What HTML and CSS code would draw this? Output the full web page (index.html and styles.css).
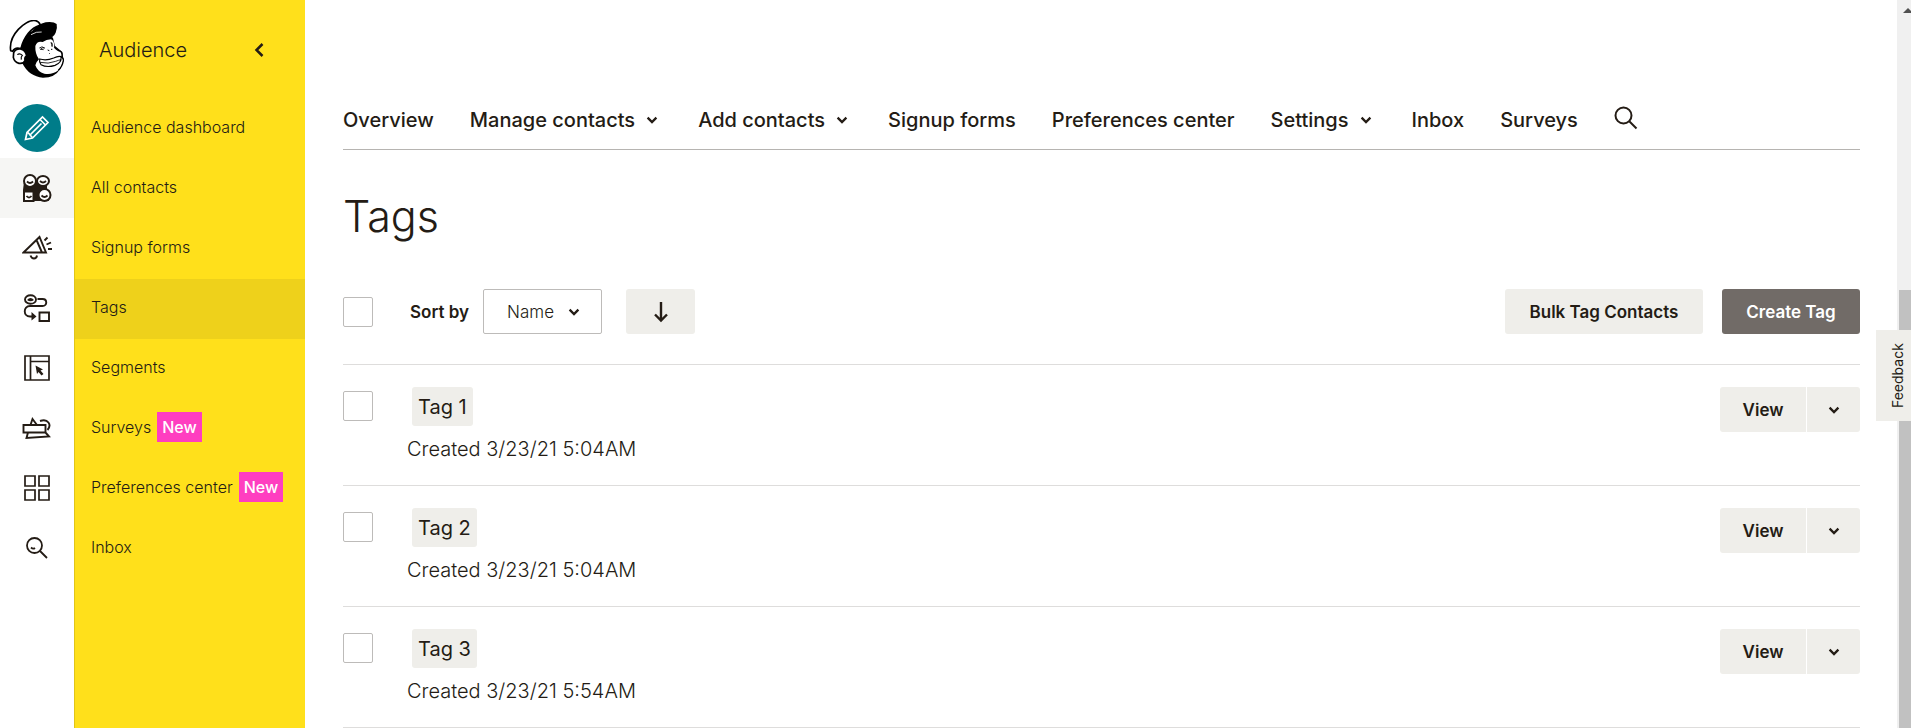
FILE: index.html
```html
<!DOCTYPE html>
<html lang="en">
<head>
<meta charset="utf-8">
<title>Tags</title>
<link rel="stylesheet" href="styles.css">
</head>
<body>
<svg class="defs" aria-hidden="true">
  <symbol id="chevron" viewBox="0 0 12 8"><path d="M1.600 1.600 6 6l4.400-4.400" fill="none" stroke="currentColor" stroke-width="2.300"/></symbol>
</svg>
<div class="app">
  <nav class="rail" aria-label="Main">
    <a class="logo" href="#" aria-label="Home">
      <svg width="56" height="58" viewBox="26 30 168 174">
        <path d="M60 112 L80 66 L120 60 L150 74 L158 84 L164 108 L186 126 L190 152 L180 176 Q164 203 128 203 Q86 200 66 160Z" fill="#000"/>
        <path d="M96 62 Q112 42 136 37 Q160 34 169 42 Q172 56 166 68 Q163 76 155 82 Q138 66 112 70 L88 76Z" fill="#000"/>
        <path d="M31 122 Q26 88 54 58 Q84 28 106 32 Q116 34 120 45 Q98 52 84 70 Q68 90 62 116 Q44 110 37 124Z" fill="#fff" stroke="#000" stroke-width="5" stroke-linejoin="round"/>
        <path d="M92 74 Q108 64 124 66" fill="none" stroke="#fff" stroke-width="2.500"/>
        <path d="M40 128 Q46 116 60 117 Q76 120 79 138 Q72 140 74 152 Q70 162 56 160 Q42 156 39 142Z" fill="#fff" stroke="#000" stroke-width="5"/>
        <path d="M51 134 Q58 128 66 136 Q61 140 63 149" fill="none" stroke="#000" stroke-width="3.500"/>
        <path d="M105 108 Q110 92 127 96 Q138 88 152 88 Q162 92 162 110 Q166 118 180 124 Q187 130 184 144 Q186 142 189 147 Q188 168 174 181 Q154 196 132 191 Q112 186 105 166 Q107 156 116 148 Q104 132 105 108Z" fill="#fff"/>
        <path d="M117 114 Q125 107 133 114 Q127 111 120 118 L130 119" fill="none" stroke="#000" stroke-width="2.500"/>
        <path d="M151 99 Q156 97 155 110" fill="none" stroke="#000" stroke-width="4"/>
        <path d="M142 120l5 2M152 118l4 0M146 129l2 2" stroke="#000" stroke-width="3"/>
        <path d="M162 110 Q166 118 180 124 Q188 130 184 142 Q190 144 189 152 Q186 170 174 181" fill="none" stroke="#000" stroke-width="4"/>
        <path d="M118 147 Q138 153 160 144 Q174 137 182 140 Q185 158 164 166 Q140 174 122 164 Q116 156 118 147Z" fill="#fff" stroke="#000" stroke-width="3.500"/>
        <path d="M119 157 Q144 163 166 154 Q176 150 182 149" fill="none" stroke="#000" stroke-width="2.500"/>
      </svg>
    </a>
    <ul class="rail-list">
      <li><a class="rail-item" href="#" aria-label="Create"><span class="create">
        <svg width="26" height="26" viewBox="0 0 26 26" fill="none" stroke="#fff" stroke-width="1.700"><path d="M1.500 24.500 3 17.500 18.500 2 24 7.500 8.500 23Z"/><path d="M16 4.500l5.500 5.500M6 20 17.500 8.500M3.500 17.500l1.500 1 1 1.500 1 1 1.200 1.500"/></svg></span></a></li>
      <li><a class="rail-item active" href="#" aria-label="Audience">
        <svg width="30" height="30" viewBox="0 0 30 30"><path d="M2 9h23v10l2 9H1V17z" fill="#241c15"/><g fill="#fff" stroke="#241c15" stroke-width="2"><circle cx="8" cy="8" r="6"/><ellipse cx="21" cy="8" rx="6" ry="5"/><path d="M2 18.500h9.500V28H2z"/><circle cx="22.500" cy="22" r="6"/></g><path d="M5 8.500q3 3 6 0M18 8q3 3 6 0M4.500 23q2.500 3 5 0M19.500 22.500q3 3 6 0" fill="none" stroke="#241c15" stroke-width="1.800"/></svg></a></li>
      <li><a class="rail-item" href="#" aria-label="Campaigns">
        <svg width="30" height="26" viewBox="0 0 30 26" fill="none" stroke="#241c15" stroke-width="1.900"><path d="M1.500 17.500 17.500 2l6.500 15.500zM14.500 5l5.500 12.500M8.500 20.500q1 3 3.500 3t3-3M22.500 5.500l3-3M24.500 9.500l4.500-2M26 14h4"/></svg></a></li>
      <li><a class="rail-item" href="#" aria-label="Automations">
        <svg width="28" height="30" viewBox="0 0 28 30" fill="none" stroke="#241c15" stroke-width="1.900"><ellipse cx="7.500" cy="6.500" rx="5.500" ry="4.300"/><path d="M14.500 6h5c5 0 5 7 0 7H7c-7 0-7 10.500 0 10.500h3M16.500 19.500H26V28h-9.500z"/><path d="M4 7q3.500-4 7 0-3.500 2.500-7 0zM8.500 19l5 4.500-5 4z" fill="#241c15" stroke="none"/></svg></a></li>
      <li><a class="rail-item" href="#" aria-label="Website">
        <svg width="26" height="26" viewBox="0 0 26 26" fill="none" stroke="#241c15" stroke-width="1.700"><path d="M1 1h24v24H1zM6.500 1v24M6.500 6.500H25"/><path d="M11.500 10.500l7.500 4-2.500 1 3 3.500-2 1.500-3-3.500-1.500 2z" fill="#241c15" stroke="none"/></svg></a></li>
      <li><a class="rail-item" href="#" aria-label="Content studio">
        <svg width="30" height="24" viewBox="0 0 30 24" fill="none" stroke="#241c15" stroke-width="1.900"><path d="M1.500 9h22v7.500h-22zM8.500 9l2-6L15 9M6 16.500 4.500 22l22.500-1.500-3.500-4M18 5c8-3 12 4 7.500 9"/></svg></a></li>
      <li><a class="rail-item" href="#" aria-label="Integrations">
        <svg width="26" height="26" viewBox="0 0 26 26" fill="none" stroke="#241c15" stroke-width="1.700"><path d="M1 1h10v10H1zM15 1h10v10H15zM1 15h10v10H1zM15 15h10v10H15z"/></svg></a></li>
      <li><a class="rail-item" href="#" aria-label="Search">
        <svg width="22" height="22" viewBox="0 0 22 22" fill="none" stroke="#241c15" stroke-width="1.800"><circle cx="8.500" cy="8.500" r="7.500"/><path d="M14 14l7 7M5 10.500q2 2 4 .5"/></svg></a></li>
    </ul>
  </nav>

  <aside class="sidebar">
    <div class="side-head">
      <h2 class="side-title">Audience</h2>
      <button class="collapse" type="button" aria-label="Collapse"><svg width="10" height="14" viewBox="0 0 10 14"><path d="M8.500 1 2.500 7l6 6" fill="none" stroke="currentColor" stroke-width="2.500"/></svg></button>
    </div>
    <ul class="side-list">
      <li><a class="side-item" href="#">Audience dashboard</a></li>
      <li><a class="side-item" href="#">All contacts</a></li>
      <li><a class="side-item" href="#">Signup forms</a></li>
      <li><a class="side-item current" href="#">Tags</a></li>
      <li><a class="side-item" href="#">Segments</a></li>
      <li><a class="side-item" href="#">Surveys <span class="badge">New</span></a></li>
      <li><a class="side-item" href="#">Preferences center <span class="badge">New</span></a></li>
      <li><a class="side-item" href="#">Inbox</a></li>
    </ul>
  </aside>

  <main class="main">
    <nav class="tabs" aria-label="Audience">
      <a href="#">Overview</a>
      <a class="has-menu" href="#">Manage contacts <svg class="chev"><use href="#chevron"/></svg></a>
      <a class="has-menu" href="#">Add contacts <svg class="chev"><use href="#chevron"/></svg></a>
      <a href="#">Signup forms</a>
      <a href="#">Preferences center</a>
      <a class="has-menu" href="#">Settings <svg class="chev"><use href="#chevron"/></svg></a>
      <a href="#">Inbox</a>
      <a href="#">Surveys</a>
      <a class="tab-search" href="#" aria-label="Search"><svg width="24" height="24" viewBox="0 0 24 24" fill="none" stroke="currentColor" stroke-width="2"><circle cx="9.500" cy="9.500" r="8"/><path d="M15 15l7.500 7.500"/></svg></a>
    </nav>
    <h1 class="title">Tags</h1>
    <div class="toolbar">
      <input class="check" type="checkbox" aria-label="Select all">
      <label class="sort-label" for="sort">Sort by</label>
      <span class="select-wrap"><select id="sort" class="select"><option>Name</option></select><svg class="chev"><use href="#chevron"/></svg></span>
      <button class="btn sort-dir" type="button" aria-label="Sort descending"><svg width="14" height="22" viewBox="0 0 14 22" fill="none" stroke="currentColor" stroke-width="2.400"><path d="M7 1v18M1 13.500l6 6 6-6"/></svg></button>
      <button class="btn bulk" type="button">Bulk Tag Contacts</button>
      <button class="btn primary" type="button">Create Tag</button>
    </div>
    <ul class="tag-list">
      <li class="tag-row">
        <input class="check" type="checkbox" aria-label="Select Tag 1">
        <div class="tag-info"><a class="tag" href="#">Tag 1</a><p class="created">Created 3/23/21 5:04AM</p></div>
        <div class="split"><button class="btn view" type="button">View</button><button class="btn more" type="button" aria-label="More"><svg class="chev"><use href="#chevron"/></svg></button></div>
      </li>
      <li class="tag-row">
        <input class="check" type="checkbox" aria-label="Select Tag 2">
        <div class="tag-info"><a class="tag" href="#">Tag 2</a><p class="created">Created 3/23/21 5:04AM</p></div>
        <div class="split"><button class="btn view" type="button">View</button><button class="btn more" type="button" aria-label="More"><svg class="chev"><use href="#chevron"/></svg></button></div>
      </li>
      <li class="tag-row">
        <input class="check" type="checkbox" aria-label="Select Tag 3">
        <div class="tag-info"><a class="tag" href="#">Tag 3</a><p class="created">Created 3/23/21 5:54AM</p></div>
        <div class="split"><button class="btn view" type="button">View</button><button class="btn more" type="button" aria-label="More"><svg class="chev"><use href="#chevron"/></svg></button></div>
      </li>
    </ul>
  </main>
  <div class="scroll-track"><span class="scroll-up"></span><span class="scroll-thumb"></span></div>
  <button class="feedback" type="button">Feedback</button>
</div>
</body>
</html>
```
FILE: styles.css
```css
* { box-sizing: border-box; }
body { margin: 0; background: #fff; color: #241c15; font: 400 20px/28px Inter, "Liberation Sans", sans-serif; }
ul { list-style: none; margin: 0; padding: 0; }
h1, h2, p { margin: 0; font-weight: 300; }
a { color: inherit; text-decoration: none; }
button, select { font: inherit; color: inherit; border: 0; cursor: pointer; }
svg { display: block; flex: none; }
.defs { position: absolute; width: 0; height: 0; }
.chev { width: 12px; height: 8px; }

.app { position: relative; display: flex; height: 100vh; overflow: hidden; }

.rail { flex: none; width: 74px; }
.logo { display: block; height: 98px; padding: 20px 9px 0; }
.rail-item { display: flex; align-items: center; justify-content: center; height: 60px; }
.rail-item.active { background: #f6f6f4; }
.create { display: grid; place-items: center; width: 48px; height: 48px; border-radius: 50%; background: #007c89; }

.sidebar { flex: none; width: 231px; background: #ffe01b; border-left: 1px solid #e0c51a; }
.side-head { display: flex; align-items: center; justify-content: space-between; height: 99px; padding: 0 41px 0 24px; }
.side-title { font-size: 20px; line-height: 28px; }
.collapse { padding: 0; background: none; }
.side-item { display: flex; align-items: center; gap: 6px; height: 60px; padding: 0 16px 4px; font-size: 16px; line-height: 24px; font-weight: 300; white-space: nowrap; }
.side-item.current { background: #eed11b; }
.badge { padding: 3px 5px; background: #ff3ec0; color: #fff; font-weight: 500; }

.main { flex: 1; min-width: 0; padding: 90px 37px 0 38px; }
.tabs { display: flex; align-items: center; gap: 36px; height: 60px; border-bottom: 1px solid #b6b4b1; font-weight: 500; white-space: nowrap; }
.tabs a { display: flex; align-items: center; gap: 11px; }
.tabs .has-menu { padding-right: 4px; }
.tab-search { padding-bottom: 4px; }
.title { margin-top: 34px; font-size: 43px; line-height: 64px; }
.toolbar { display: flex; align-items: center; margin-top: 41px; padding-bottom: 30px; border-bottom: 1px solid #dedddc; font-size: 17px; }
.check { appearance: none; flex: none; width: 30px; height: 30px; margin: 0; border: 1px solid #bdbbb9; border-radius: 2px; background: #fff; }
.sort-label { margin: 0 14px 0 37px; font-weight: 600; }
.select-wrap { position: relative; display: flex; align-items: center; width: 119px; height: 45px; margin-right: 24px; }
.select { appearance: none; width: 100%; height: 100%; padding: 0 23px; border: 1px solid #bdbbb9; border-radius: 2px; background: #fff; font-size: 17px; font-weight: 300; }
.select-wrap .chev { position: absolute; right: 22px; pointer-events: none; }
.btn { display: flex; align-items: center; justify-content: center; height: 45px; padding: 0 24px; border-radius: 3px; background: #efeeea; font-size: 17px; font-weight: 600; white-space: nowrap; }
.sort-dir { width: 69px; }
.bulk { width: 198px; margin-left: auto; }
.primary { width: 138px; margin-left: 19px; background: #716b67; color: #fff; }

.tag-row { display: flex; align-items: flex-start; height: 121px; padding-top: 22px; border-bottom: 1px solid #dedddc; }
.tag-row .check { margin-top: 4px; }
.tag-info { flex: 1; padding-left: 34px; }
.tag { display: inline-block; margin-left: 5px; padding: 6px 6px 5px; border-radius: 3px; background: #efeeea; vertical-align: top; }
.created { margin-top: 9px; font-weight: 300; }
.split { display: flex; gap: 1px; }
.view { width: 86px; border-radius: 3px 0 0 3px; }
.more { width: 53px; padding: 0; border-radius: 0 3px 3px 0; }

.scroll-track { flex: none; display: flex; flex-direction: column; width: 14px; background: #f0f0f0; overflow: hidden; }
.scroll-up { margin: 8px 0 0 6px; width: 0; border: 5px solid transparent; border-top: 0; border-bottom-color: #505050; }
.scroll-thumb { flex: 1; margin: 277px 0 0 2px; background: #c1c1c1; }
.feedback { position: absolute; right: 0; top: 330px; width: 35px; height: 91px; padding: 0 8px 0 0; background: #efeeea; font-size: 14px; line-height: 24px; writing-mode: vertical-rl; transform: rotate(180deg); }
```
